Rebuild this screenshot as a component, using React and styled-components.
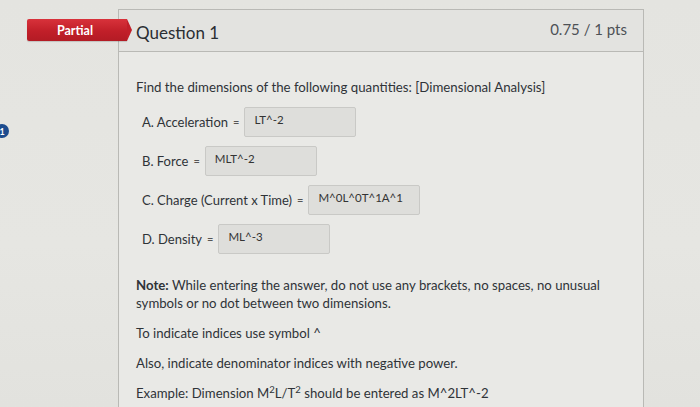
import React from "react";
import styled, { createGlobalStyle } from "styled-components";

const Global = createGlobalStyle`
  html, body { margin: 0; padding: 0; }
  body {
    background: #e3e3df;
    font-family: Lato, "Open Sans", sans-serif;
    color: #2f3338;
  }
`;

const Page = styled.div`
  position: relative;
  width: 700px;
  height: 407px;
  overflow: hidden;
  background: linear-gradient(180deg, #e4e4e0 0%, #e6e6e2 60%, #e2e2de 100%);
  padding: 9px 0 0 118px;
  box-sizing: border-box;
`;

const Badge = styled.div`
  position: absolute;
  left: 27px;
  top: 19px;
  width: 100px;
  height: 22px;
  background: linear-gradient(180deg, #d8323b 0%, #c11f29 55%, #b31b24 100%);
  color: #fff;
  font-size: 12.5px;
  font-weight: 700;
  display: flex;
  align-items: center;
  justify-content: center;
  padding-right: 4px;
  box-sizing: border-box;
  border-radius: 2px 0 0 2px;
  box-shadow: 0 1px 1px rgba(0, 0, 0, 0.15);
  &::after {
    content: "";
    position: absolute;
    right: -5px;
    top: 0;
    border-top: 11px solid transparent;
    border-bottom: 11px solid transparent;
    border-left: 5px solid #c11f29;
  }
`;

const Marker = styled.div`
  position: absolute;
  left: -5px;
  top: 124px;
  width: 14px;
  height: 14px;
  border-radius: 50%;
  background: #1d4c8e;
  color: #fff;
  font-size: 9px;
  font-weight: 700;
  display: flex;
  align-items: center;
  justify-content: center;
`;

const Card = styled.section`
  width: 526px;
  border: 1px solid #b9b9b5;
  border-bottom: none;
  box-sizing: border-box;
  background: #e9e9e6;
  min-height: 420px;
`;

const Header = styled.header`
  height: 41px;
  display: flex;
  align-items: center;
  justify-content: space-between;
  padding: 0 16px 0 17px;
  background: #e3e3e0;
  border-bottom: 1px solid #b9b9b5;
`;

const Title = styled.h2`
  margin: 4px 0 0;
  font-size: 17px;
  font-weight: 400;
  color: #2b2e33;
`;

const Points = styled.div`
  font-size: 15px;
  color: #4d5156;
  margin-bottom: 4px;
`;

const Body = styled.div`
  padding: 25px 17px 0 17px;
  font-size: 13.25px;
  line-height: 20px;
`;

const Para = styled.p`
  margin: 0 0 ${(p) => p.$gap ?? 12}px;
  line-height: ${(p) => p.$lh || 20}px;
  sup {
    line-height: 0;
    font-size: 0.72em;
  }
`;

const Rows = styled.div`
  display: flex;
  flex-direction: column;
  gap: 9px;
  padding-left: 6px;
  margin: 10px 0 22px;
`;

const Row = styled.div`
  display: flex;
  align-items: center;
  height: 30px;
  gap: 5px;
  font-size: 13px;
`;

const Eq = styled.span`
  font-size: 11px;
  color: #555;
`;

const Input = styled.div`
  width: 112px;
  height: 30px;
  box-sizing: border-box;
  border: 1px solid #c9c9c6;
  border-radius: 2px;
  background: #dededb;
  font-size: 11.5px;
  color: #333;
  padding: 0 0 4px 9px;
  display: flex;
  align-items: center;
`;

const Notes = styled.div`
  font-size: 13.2px;
`;

const rows = [
  { label: "A. Acceleration", value: "LT^-2" },
  { label: "B. Force", value: "MLT^-2" },
  { label: "C. Charge (Current x Time)", value: "M^0L^0T^1A^1" },
  { label: "D. Density", value: "ML^-3" },
];

export default function App() {
  return (
    <>
      <Global />
      <Page>
        <Badge>Partial</Badge>
        <Marker>1</Marker>
        <Card>
          <Header>
            <Title>Question 1</Title>
            <Points>0.75 / 1 pts</Points>
          </Header>
          <Body>
            <Para $gap={0}>
              Find the dimensions of the following quantities: [Dimensional Analysis]
            </Para>
            <Rows>
              {rows.map((r) => (
                <Row key={r.label}>
                  <span>{r.label}</span>
                  <Eq>=</Eq>
                  <Input>{r.value}</Input>
                </Row>
              ))}
            </Rows>
            <Notes>
              <Para $lh={18}>
                <b>Note:</b> While entering the answer, do not use any brackets, no spaces, no unusual
                symbols or no dot between two dimensions.
              </Para>
              <Para $lh={18}>To indicate indices use symbol ^</Para>
              <Para $lh={18}>Also, indicate denominator indices with negative power.</Para>
              <Para $lh={18}>
                Example: Dimension M<sup>2</sup>L/T<sup>2</sup> should be entered as M^2LT^-2
              </Para>
            </Notes>
          </Body>
        </Card>
      </Page>
    </>
  );
}
